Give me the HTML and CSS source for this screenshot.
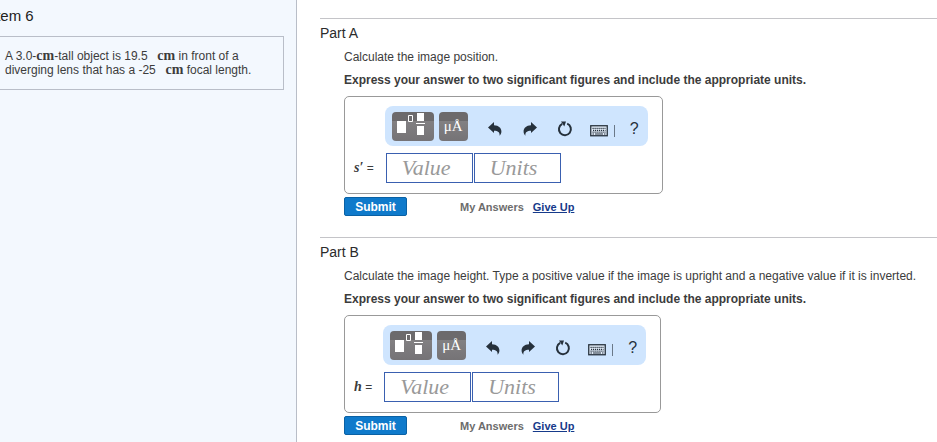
FILE: index.html
```html
<!DOCTYPE html>
<html lang="en">
<head>
  <meta charset="utf-8">
  <title>Item 6</title>
  <link rel="stylesheet" href="styles.css">
</head>
<body>
  <!-- Shared icons -->
  <svg class="sprite" aria-hidden="true">
    <symbol id="icon-template" viewBox="0 0 42 29">
      <path fill="#fff" d="M5 9h9v12H5zM25 1h7v8h-7zM24 11h9v1h-9zM25 14h7v9h-7z"/>
      <path fill="none" stroke="#fff" d="M16.500 3.500h4v6h-4z"/>
    </symbol>
    <symbol id="icon-undo" viewBox="0 0 14 14">
      <path d="M0 5.500L6 0v3.200c4.800.2 7.400 2.800 7.400 6.400 0 1.600-.6 3-1.800 4.200.3-3.600-1.600-5-5.600-5V11z"/>
    </symbol>
    <symbol id="icon-reset" viewBox="0 0 16 16">
      <path fill="none" stroke="currentColor" stroke-width="2" d="M10.200 2.700A6 6 0 1 1 5.200 2.900"/>
      <path d="M4 .5h5L7.300 5.500z"/>
    </symbol>
    <symbol id="icon-keyboard" viewBox="0 0 18 12">
      <rect x=".75" y=".75" width="16.500" height="10" fill="#e4eefa" stroke="currentColor" stroke-width="1.300"/>
      <path fill="none" stroke="currentColor" stroke-width="1.200" stroke-dasharray="1.200 .8" d="M2.500 3.300h13M3 5.300h12.500M2.500 7.200h13"/>
      <path stroke="currentColor" d="M2.500 9h1.500M5 9h8M14 9h1.500"/>
    </symbol>
  </svg>

  <div class="page">
    <aside class="sidebar">
      <h1>Item 6</h1>
      <div class="problem">
        A 3.0-<span class="unit">cm</span>-tall object is 19.5 &nbsp;<span class="unit spaced">cm</span> in front of a<br>
        diverging lens that has a -25 &nbsp;<span class="unit spaced">cm</span> focal length.
      </div>
    </aside>

    <main>
      <section class="part">
        <h2>Part A</h2>
        <form class="question">
          <p>Calculate the image position.</p>
          <p class="instructions">Express your answer to two significant figures and include the appropriate units.</p>
          <div class="answer-box">
            <div class="toolbar">
              <button type="button" class="tool template" aria-label="Templates"><svg><use href="#icon-template"/></svg></button>
              <button type="button" class="tool symbols">μÅ</button>
              <button type="button" class="icon undo" aria-label="Undo"><svg><use href="#icon-undo"/></svg></button>
              <button type="button" class="icon redo" aria-label="Redo"><svg><use href="#icon-undo"/></svg></button>
              <button type="button" class="icon reset" aria-label="Reset"><svg><use href="#icon-reset"/></svg></button>
              <button type="button" class="icon keyboard" aria-label="Keyboard shortcuts"><svg><use href="#icon-keyboard"/></svg></button>
              <button type="button" class="icon help">?</button>
            </div>
            <label for="value-a"><i>s′</i> =</label>
            <div class="fields">
              <input type="text" id="value-a" placeholder="Value">
              <input type="text" placeholder="Units" aria-label="Units">
            </div>
          </div>
          <div class="actions">
            <button type="submit" class="submit">Submit</button>
            <span class="my-answers">My Answers</span>
            <a href="#">Give Up</a>
          </div>
        </form>
      </section>

      <section class="part">
        <h2>Part B</h2>
        <form class="question">
          <p>Calculate the image height. Type a positive value if the image is upright and a negative value if it is inverted.</p>
          <p class="instructions">Express your answer to two significant figures and include the appropriate units.</p>
          <div class="answer-box">
            <div class="toolbar">
              <button type="button" class="tool template" aria-label="Templates"><svg><use href="#icon-template"/></svg></button>
              <button type="button" class="tool symbols">μÅ</button>
              <button type="button" class="icon undo" aria-label="Undo"><svg><use href="#icon-undo"/></svg></button>
              <button type="button" class="icon redo" aria-label="Redo"><svg><use href="#icon-undo"/></svg></button>
              <button type="button" class="icon reset" aria-label="Reset"><svg><use href="#icon-reset"/></svg></button>
              <button type="button" class="icon keyboard" aria-label="Keyboard shortcuts"><svg><use href="#icon-keyboard"/></svg></button>
              <button type="button" class="icon help">?</button>
            </div>
            <label for="value-b"><i>h</i> =</label>
            <div class="fields">
              <input type="text" id="value-b" placeholder="Value">
              <input type="text" placeholder="Units" aria-label="Units">
            </div>
          </div>
          <div class="actions">
            <button type="submit" class="submit">Submit</button>
            <span class="my-answers">My Answers</span>
            <a href="#">Give Up</a>
          </div>
        </form>
      </section>
    </main>
  </div>
</body>
</html>
```
FILE: styles.css
```css
* {
  box-sizing: border-box;
}

body {
  margin: 0;
  background: #fff;
  color: #3c3c3c;
  font-family: "Liberation Sans", Arial, sans-serif;
  font-size: 12px;
  line-height: 14px;
}

.sprite {
  display: none;
}

.page {
  display: flex;
  min-height: 100vh;
  overflow: hidden;
}

/* Problem statement on the left */
.sidebar {
  flex: 0 0 305px;
  margin-left: -8px;
  padding-top: 8px;
  background: #f3f8fe;
  border-right: 1px solid #b9bec8;
}

h1 {
  margin: 0 0 12px;
  color: #222;
  font-size: 15px;
  font-weight: normal;
  line-height: 16px;
}

.problem {
  margin-right: 12px;
  padding: 12px;
  border: 1px solid #b9bec8;
}

.unit {
  font-family: "Liberation Serif", serif;
  font-size: 14px;
  font-weight: bold;
}

.spaced {
  margin-left: 3px;
}

/* Question parts */
main {
  flex: 1;
  min-width: 0;
  padding: 18px 0 0 23px;
}

.part {
  border-top: 1px solid #c4c4c8;
  padding-top: 6px;
  margin-bottom: 21px;
}

h2 {
  margin: 0 0 9px;
  color: #2b2b2b;
  font-size: 14px;
  font-weight: normal;
  line-height: 16px;
}

.question {
  padding-left: 24px;
}

p {
  margin: 0 0 9px;
}

.instructions {
  font-weight: bold;
}

/* Answer editor */
.answer-box {
  display: inline-grid;
  grid-template-columns: auto auto;
  column-gap: 11px;
  row-gap: 7px;
  align-items: center;
  padding: 9px 14px 10px 9px;
  border: 1px solid #999;
  border-radius: 5px;
  vertical-align: top;
}

.toolbar {
  grid-column: 2;
  display: flex;
  align-items: center;
  width: 263px;
  height: 40px;
  padding: 0 7px;
  background: #cfe5fe;
  border-radius: 8px;
}

.toolbar button {
  flex: none;
  padding: 0;
  border: none;
}

.tool {
  height: 29px;
  border-radius: 4px;
  background: linear-gradient(#6c6a6c 0, #6c6a6c 9px, #828082 9px, #757376 100%);
  color: #fff;
}

.template {
  width: 42px;
}

.template svg {
  display: block;
  width: 42px;
  height: 29px;
}

.symbols {
  width: 29px;
  margin-left: 5px;
  font-family: "Liberation Serif", serif;
  font-size: 15px;
  line-height: 24px;
}

.icon {
  background: none;
  color: #26313c;
}

.icon svg {
  display: block;
  width: 100%;
  height: 100%;
  fill: currentColor;
}

.undo,
.redo {
  width: 14px;
  height: 14px;
  margin: 6px 0 0 20px;
}

.redo {
  margin-left: 21px;
  transform: scaleX(-1);
}

.reset {
  width: 16px;
  height: 16px;
  margin: 6px 0 0 20px;
}

.keyboard {
  display: flex;
  align-items: center;
  width: 25px;
  height: 12px;
  margin: 10px 0 0 17px;
}

.toolbar .keyboard {
  border-right: 1px solid #6a7888;
}

.keyboard svg {
  width: 18px;
  height: 12px;
}

.help {
  margin: 6px 0 0 15px;
  font-family: "Liberation Sans", Arial, sans-serif;
  font-size: 16px;
}

label {
  font-size: 12px;
}

label i {
  font-family: "Liberation Serif", serif;
  font-size: 14px;
  font-weight: bold;
}

.fields {
  display: flex;
  gap: 1px;
  margin-left: 1px;
}

.fields input {
  width: 87px;
  height: 30px;
  padding: 0 0 0 15px;
  border: 1px solid #3a60b0;
  border-radius: 0;
  background: #fff;
  font: italic 22px "Liberation Serif", serif;
}

.fields input::placeholder {
  color: #999;
}

/* Submit row */
.actions {
  display: flex;
  align-items: center;
  margin-top: 3px;
  font-size: 11px;
  font-weight: bold;
}

.submit {
  width: 63px;
  height: 19px;
  padding: 0;
  border: 1px solid #0a61a4;
  border-radius: 2px;
  background: #0f7acb;
  color: #fff;
  font: bold 12px "Liberation Sans", Arial, sans-serif;
}

.my-answers {
  margin: 0 9px 0 53px;
  color: #6c6c6c;
}

.actions a {
  color: #163a8a;
}
```
